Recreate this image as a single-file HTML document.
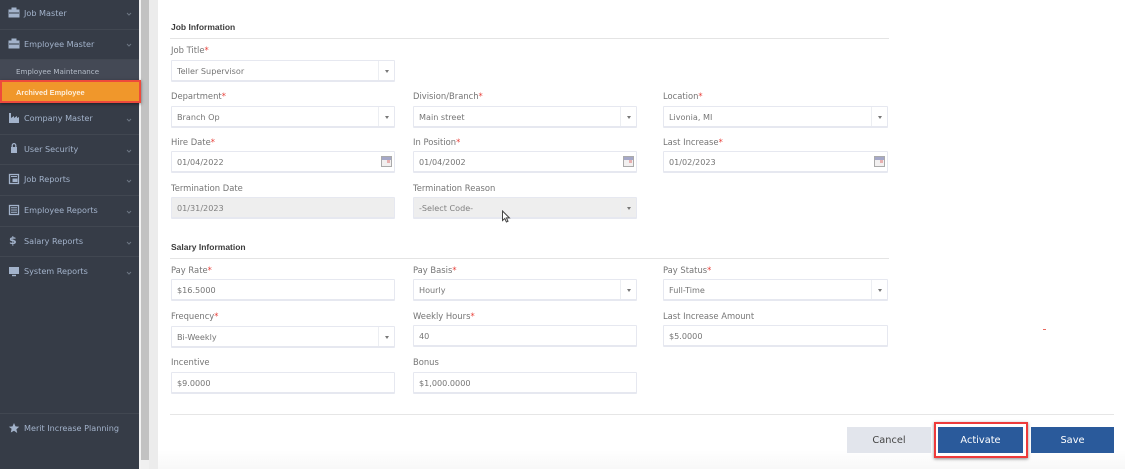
<!DOCTYPE html>
<html><head><meta charset="utf-8"><style>
html,body{margin:0;padding:0;background:#fff}
body{width:1125px;height:469px;position:relative;overflow:hidden;font-family:"DejaVu Sans","Liberation Sans",sans-serif;color:#666}
div,span,svg{position:absolute;box-sizing:border-box;white-space:nowrap}
#side{left:0;top:0;width:139px;height:469px;background:#363c47}
.sep{left:0;width:139px;height:1px;background:#414751}
.mi{left:24px;font-size:8.1px;line-height:14px;color:#a3b3cb}
.ic{left:8px;width:12px;height:12px}
.ch{left:125px;width:8px;height:6px}
.l{font-size:8.4px;line-height:14px;color:#757575}
.l b{font-weight:normal;color:#e8403a;position:static}
.f{height:22px;border:1px solid #e6e8f0;border-bottom:2px solid #e6e8f0;background:#fff;border-radius:1px;font-size:8.1px;line-height:21px;padding-left:5px;color:#757575}
.w1{width:224px}.c1{left:171px}.c2{left:413px}.c3{left:663px}.c3.w1{width:225px}
.s::after{content:"";position:absolute;right:15px;top:0;bottom:0;width:1px;background:#eceef2}
.s::before{content:"";position:absolute;right:5px;top:9px;border:2px solid transparent;border-top:3px solid #777;border-bottom:0}
.dis{background:#eeeeee;color:#808080}
.cal{left:209px;top:4px;width:11px;height:11px;background:linear-gradient(#a5a8c8 0 3px,#f2f0f0 3px);border:1px solid #aaa}
.cal::after{content:"";position:absolute;right:1px;top:3px;width:3px;height:3px;background:#e8b0b0}
.h{font-family:"Liberation Sans",sans-serif;font-size:8.5px;font-weight:bold;line-height:14px;color:#3c3c3c;left:171px}
.hr{left:170px;width:719px;height:1px;background:#e4e4e4}
.btn{top:427px;height:26px;text-align:center;font-size:9.8px;line-height:27px;color:#fff;background:#2a5a9b}
</style></head><body>
<div style="left:139px;top:0;width:2px;height:469px;background:#f2f2f2"></div>
<div style="left:141px;top:0;width:8px;height:460px;background:#c2c2c2"></div>
<div style="left:141px;top:460px;width:8px;height:9px;background:#f0f0f0"></div>
<div style="left:149px;top:0;width:9px;height:469px;background:#ececec"></div>
<div style="left:158px;top:450px;width:967px;height:19px;background:linear-gradient(#fff,#f8f8f8)"></div>

<div id="side"></div>
<div style="left:0;top:60px;width:139px;height:21px;background:#444955"></div>
<div class="sep" style="top:29px"></div><div class="sep" style="top:59px"></div><div class="sep" style="top:134px"></div><div class="sep" style="top:164px"></div><div class="sep" style="top:195px"></div><div class="sep" style="top:226px"></div><div class="sep" style="top:256px"></div><div class="sep" style="top:413px"></div>

<svg class="ic" style="top:6px" viewBox="0 0 12 12"><path d="M1 4h10v7H1zM4 4V2h4v2" fill="#a3b3cb" stroke="#a3b3cb"/><path d="M1 7h10" stroke="#363c47"/></svg>
<div class="mi" style="top:6px">Job Master</div>
<svg class="ch" style="top:11px" viewBox="0 0 8 6"><path d="M2 2L4 4l2-2" fill="none" stroke="#6d7683" stroke-width="1"/></svg>

<svg class="ic" style="top:37px" viewBox="0 0 12 12"><path d="M1 4h10v7H1zM4 4V2h4v2" fill="#a3b3cb" stroke="#a3b3cb"/><path d="M1 7h10" stroke="#363c47"/></svg>
<div class="mi" style="top:37px">Employee Master</div>
<svg class="ch" style="top:42px" viewBox="0 0 8 6"><path d="M2 2L4 4l2-2" fill="none" stroke="#6d7683" stroke-width="1"/></svg>

<div style="left:16px;top:65px;font-size:7.1px;line-height:13px;color:#b4bcc8">Employee Maintenance</div>
<div style="left:0;top:80px;width:141px;height:23px;background:#f0972b;border:2px solid #ee4a3c;box-shadow:0 1px 3px rgba(0,0,0,.5)"></div>
<div style="left:16px;top:86px;font-family:'Liberation Sans',sans-serif;font-size:7.4px;font-weight:bold;line-height:13px;color:#fdeedb">Archived Employee</div>

<svg class="ic" style="top:112px" viewBox="0 0 12 12"><path d="M1 1h2v5l3-2v2l3-2v2l2-1v6H1z" fill="#a3b3cb"/></svg>
<div class="mi" style="top:111px">Company Master</div>
<svg class="ch" style="top:117px" viewBox="0 0 8 6"><path d="M2 2L4 4l2-2" fill="none" stroke="#6d7683" stroke-width="1"/></svg>

<svg class="ic" style="top:142px" viewBox="0 0 12 12"><path d="M3 5h6v6H3z" fill="#a3b3cb"/><path d="M4.2 5V3.4a1.8 1.8 0 013.6 0V5" fill="none" stroke="#a3b3cb" stroke-width="1.2"/></svg>
<div class="mi" style="top:142px">User Security</div>
<svg class="ch" style="top:148px" viewBox="0 0 8 6"><path d="M2 2L4 4l2-2" fill="none" stroke="#6d7683" stroke-width="1"/></svg>

<svg class="ic" style="top:173px" viewBox="0 0 12 12"><path d="M1.5 1.5h9v9h-9z" fill="none" stroke="#a3b3cb" stroke-width="1.3"/><path d="M3 3.5h6M5 6h4v2.5H5z" stroke="#a3b3cb" fill="#a3b3cb"/></svg>
<div class="mi" style="top:172px">Job Reports</div>
<svg class="ch" style="top:178px" viewBox="0 0 8 6"><path d="M2 2L4 4l2-2" fill="none" stroke="#6d7683" stroke-width="1"/></svg>

<svg class="ic" style="top:204px" viewBox="0 0 12 12"><path d="M1.5 1.5h9v9h-9z" fill="none" stroke="#a3b3cb" stroke-width="1.3"/><path d="M3 3.8h6M3 6h6M3 8.2h6" stroke="#a3b3cb"/></svg>
<div class="mi" style="top:203px">Employee Reports</div>
<svg class="ch" style="top:209px" viewBox="0 0 8 6"><path d="M2 2L4 4l2-2" fill="none" stroke="#6d7683" stroke-width="1"/></svg>

<div style="left:9px;top:234px;font-size:11px;line-height:14px;font-weight:bold;color:#a3b3cb">$</div>
<div class="mi" style="top:234px">Salary Reports</div>
<svg class="ch" style="top:240px" viewBox="0 0 8 6"><path d="M2 2L4 4l2-2" fill="none" stroke="#6d7683" stroke-width="1"/></svg>

<svg class="ic" style="top:265px" viewBox="0 0 12 12"><path d="M1 2h10v7H1z" fill="#a3b3cb"/><path d="M4 10.5h4" stroke="#a3b3cb" stroke-width="1.4"/></svg>
<div class="mi" style="top:264px">System Reports</div>
<svg class="ch" style="top:270px" viewBox="0 0 8 6"><path d="M2 2L4 4l2-2" fill="none" stroke="#6d7683" stroke-width="1"/></svg>

<svg class="ic" style="top:422px" viewBox="0 0 12 12"><path d="M6 1l1.5 3.4 3.7.4-2.8 2.5.8 3.7L6 8.7l-3.2 1.8.8-3.7L.8 4.8l3.7-.4z" fill="#a3b3cb"/></svg>
<div class="mi" style="top:421px">Merit Increase Planning</div>

<div class="h" style="top:20px">Job Information</div>
<div class="hr" style="top:38px"></div>
<div class="l c1" style="top:43px">Job Title<b>*</b></div>
<div class="f s w1 c1" style="top:60px">Teller Supervisor</div>

<div class="l c1" style="top:89px">Department<b>*</b></div>
<div class="l c2" style="top:89px">Division/Branch<b>*</b></div>
<div class="l c3" style="top:89px">Location<b>*</b></div>
<div class="f s w1 c1" style="top:106px">Branch Op</div>
<div class="f s w1 c2" style="top:106px">Main street</div>
<div class="f s w1 c3" style="top:106px">Livonia, MI</div>

<div class="l c1" style="top:135px">Hire Date<b>*</b></div>
<div class="l c2" style="top:135px">In Position<b>*</b></div>
<div class="l c3" style="top:135px">Last Increase<b>*</b></div>
<div class="f w1 c1" style="top:151px">01/04/2022<span class="cal"></span></div>
<div class="f w1 c2" style="top:151px">01/04/2002<span class="cal"></span></div>
<div class="f w1 c3" style="top:151px">01/02/2023<span class="cal" style="left:210px"></span></div>

<div class="l c1" style="top:181px">Termination Date</div>
<div class="l c2" style="top:181px">Termination Reason</div>
<div class="f w1 c1 dis" style="top:197px">01/31/2023</div>
<div class="f s w1 c2 dis" style="top:197px">-Select Code-</div>
<svg style="left:501px;top:210px" width="11" height="14" viewBox="0 0 11 14"><path d="M1.5 1v9.5l2.3-2 1.6 3.5 1.6-.7-1.6-3.4h3z" fill="#fff" stroke="#444" stroke-width="1"/></svg>

<div class="h" style="top:240px">Salary Information</div>
<div class="hr" style="top:258px"></div>
<div class="l c1" style="top:263px">Pay Rate<b>*</b></div>
<div class="l c2" style="top:263px">Pay Basis<b>*</b></div>
<div class="l c3" style="top:263px">Pay Status<b>*</b></div>
<div class="f w1 c1" style="top:279px">$16.5000</div>
<div class="f s w1 c2" style="top:279px">Hourly</div>
<div class="f s w1 c3" style="top:279px">Full-Time</div>

<div class="l c1" style="top:309px">Frequency<b>*</b></div>
<div class="l c2" style="top:309px">Weekly Hours<b>*</b></div>
<div class="l c3" style="top:309px">Last Increase Amount</div>
<div class="f s w1 c1" style="top:326px">Bi-Weekly</div>
<div class="f w1 c2" style="top:325px">40</div>
<div class="f w1 c3" style="top:325px">$5.0000</div>

<div class="l c1" style="top:355px">Incentive</div>
<div class="l c2" style="top:355px">Bonus</div>
<div class="f w1 c1" style="top:372px">$9.0000</div>
<div class="f w1 c2" style="top:372px">$1,000.0000</div>

<div style="left:1043px;top:329px;width:3px;height:1px;background:#e86a60"></div>
<div style="left:170px;top:414px;width:944px;height:1px;background:#e6e6e6"></div>

<div class="btn" style="left:847px;width:84px;background:#e2e5ec;color:#444">Cancel</div>
<div style="left:934px;top:422px;width:94px;height:36px;border:2px solid #ee3b3b;box-shadow:0 1px 3px rgba(0,0,0,.45);background:#fff"></div>
<div class="btn" style="left:938px;width:85px">Activate</div>
<div class="btn" style="left:1031px;width:83px">Save</div>
</body></html>
